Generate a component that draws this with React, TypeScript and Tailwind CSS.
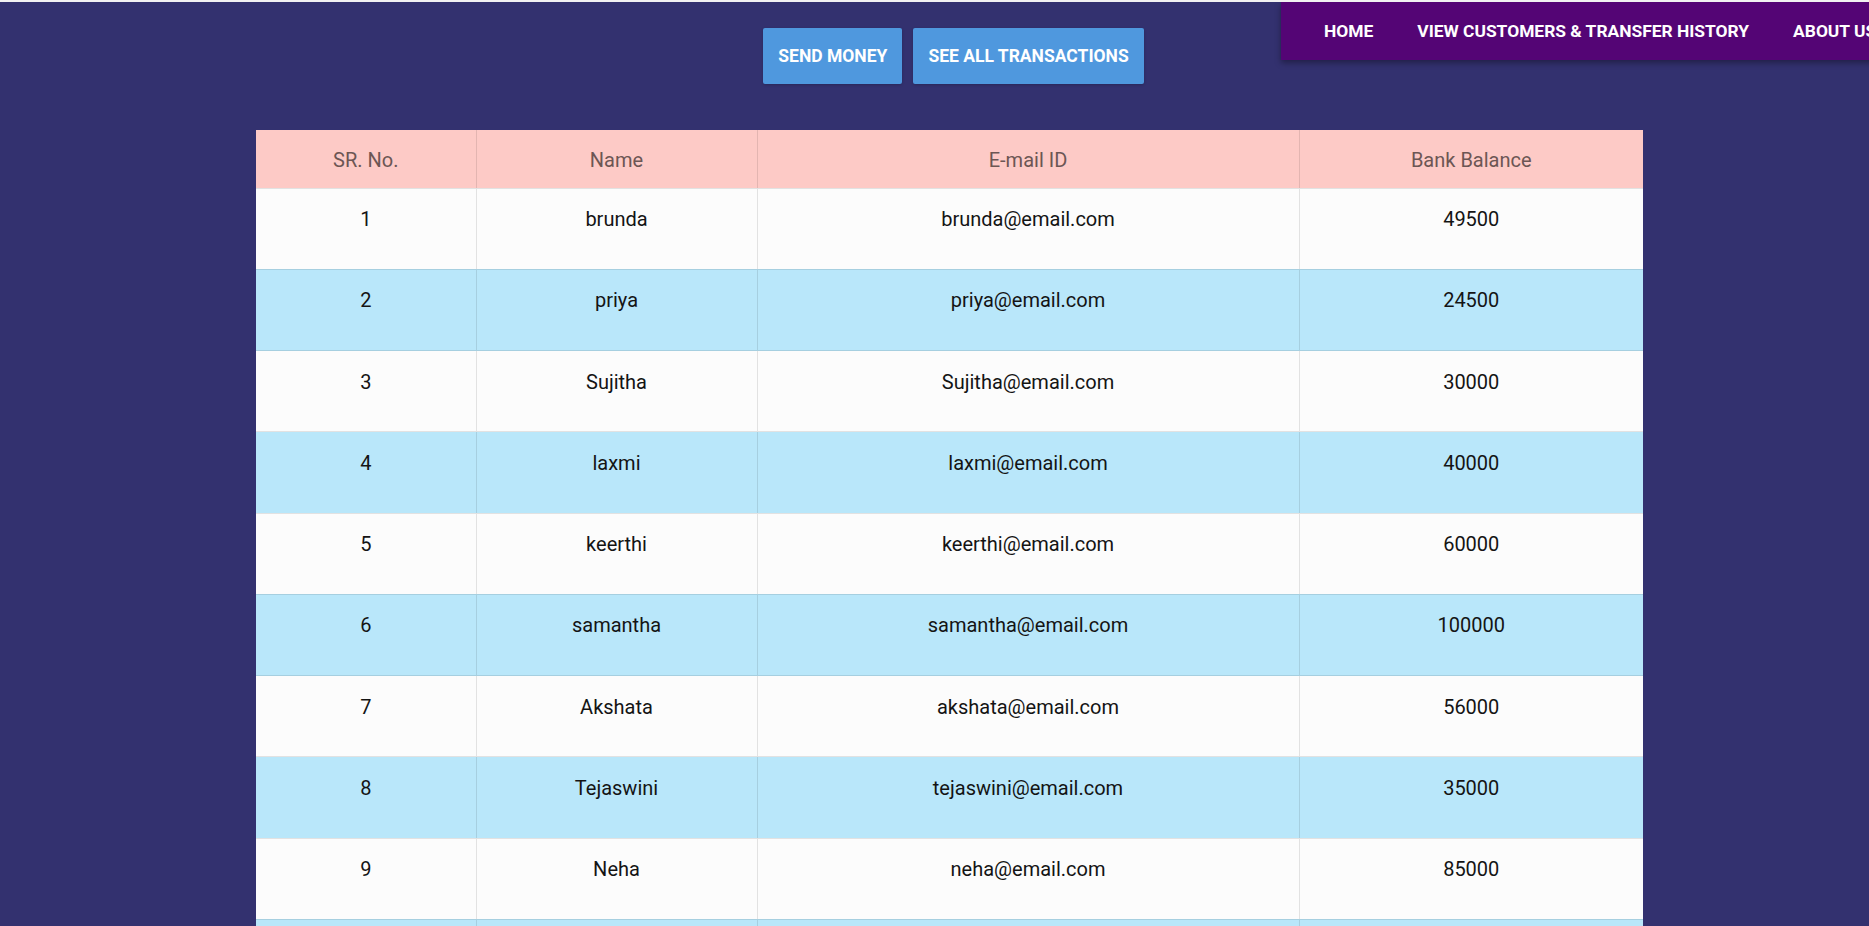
import React from "react";

interface Customer {
  id: number;
  name: string;
  email: string;
  balance: number;
}

const customers: Customer[] = [
  { id: 1, name: "brunda", email: "brunda@email.com", balance: 49500 },
  { id: 2, name: "priya", email: "priya@email.com", balance: 24500 },
  { id: 3, name: "Sujitha", email: "Sujitha@email.com", balance: 30000 },
  { id: 4, name: "laxmi", email: "laxmi@email.com", balance: 40000 },
  { id: 5, name: "keerthi", email: "keerthi@email.com", balance: 60000 },
  { id: 6, name: "samantha", email: "samantha@email.com", balance: 100000 },
  { id: 7, name: "Akshata", email: "akshata@email.com", balance: 56000 },
  { id: 8, name: "Tejaswini", email: "tejaswini@email.com", balance: 35000 },
  { id: 9, name: "Neha", email: "neha@email.com", balance: 85000 },
  { id: 10, name: "Divya", email: "divya@email.com", balance: 45000 },
];

const navLinks = ["Home", "View Customers & Transfer History", "About Us"];

export default function App() {
  return (
    <div className="relative h-[926px] overflow-hidden border-t-2 border-[#f2f2f2] bg-[#33316f] font-['Roboto',sans-serif]">
      {/* floating nav */}
      <nav className="absolute left-[1281px] top-0 h-[58px] w-[640px] bg-[#540575] shadow-[0_3px_6px_rgba(0,0,0,0.35)]">
        <ul className="flex h-full items-center whitespace-nowrap pl-[21px] pt-[2px]">
          {navLinks.map((link) => (
            <li key={link} className="px-[22px] text-[17.4px] font-bold uppercase leading-none text-white">
              {link}
            </li>
          ))}
        </ul>
      </nav>

      <div className="ml-[256px] w-[1387px]">
        <div className="flex justify-center gap-[11px] pl-[8px] pt-[26px]">
          <button className="h-[56px] rounded-[2px] bg-[#4f98de] px-[15px] text-[17.5px] font-bold uppercase text-white shadow-[0_1px_3px_rgba(0,0,0,0.2)]">
            Send Money
          </button>
          <button className="h-[56px] rounded-[2px] bg-[#4f98de] px-[15px] text-[17.5px] font-bold uppercase text-white shadow-[0_1px_3px_rgba(0,0,0,0.2)]">
            See All Transactions
          </button>
        </div>

        <table className="mt-[46px] w-full table-fixed border-collapse text-center text-[20px]">
          <colgroup>
            <col className="w-[220px]" />
            <col className="w-[281px]" />
            <col className="w-[542px]" />
            <col className="w-[344px]" />
          </colgroup>
          <thead>
            <tr className="h-[58px] bg-[#fdcac6] text-[#6c5654]">
              <th className="border-r border-black/10 pt-[2px] font-normal">SR. No.</th>
              <th className="border-r border-black/10 pt-[2px] font-normal">Name</th>
              <th className="border-r border-black/10 pt-[2px] font-normal">E-mail ID</th>
              <th className="pt-[2px] font-normal">Bank Balance</th>
            </tr>
          </thead>
          <tbody className="text-[#141414]">
            {customers.map((c, i) => (
              <tr
                key={c.id}
                className={`h-[81.25px] border-t border-black/10 ${i % 2 === 0 ? "bg-[#fcfcfc]" : "bg-[#b9e7fa]"}`}
              >
                <td className="border-r border-black/10 pb-[19px] align-middle">{c.id}</td>
                <td className="border-r border-black/10 pb-[19px] align-middle">{c.name}</td>
                <td className="border-r border-black/10 pb-[19px] align-middle">{c.email}</td>
                <td className="pb-[19px] align-middle">{c.balance}</td>
              </tr>
            ))}
          </tbody>
        </table>
      </div>
    </div>
  );
}
